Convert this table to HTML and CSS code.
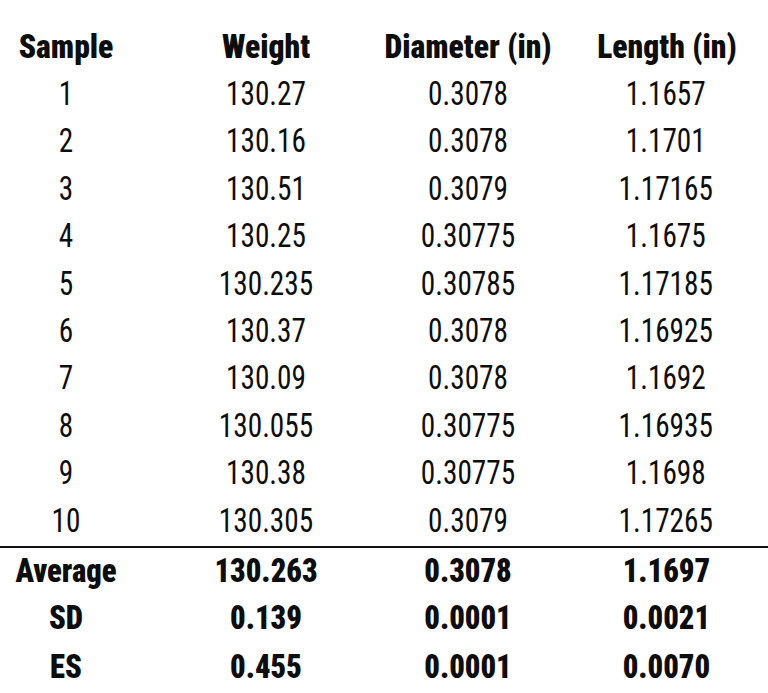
FILE: index.html
```html
<!DOCTYPE html>
<html lang="en">
<head>
<meta charset="utf-8">
<title>Sample measurements</title>
<link rel="stylesheet" href="styles.css">
</head>
<body>
<div class="sheet">
  <div class="row head"><div class="cell">Sample</div><div class="cell">Weight</div><div class="cell">Diameter (in)</div><div class="cell last">Length (in)</div></div>
  <div class="row"><div class="cell">1</div><div class="cell">130.27</div><div class="cell">0.3078</div><div class="cell last">1.1657</div></div>
  <div class="row"><div class="cell">2</div><div class="cell">130.16</div><div class="cell">0.3078</div><div class="cell last">1.1701</div></div>
  <div class="row"><div class="cell">3</div><div class="cell">130.51</div><div class="cell">0.3079</div><div class="cell last">1.17165</div></div>
  <div class="row"><div class="cell">4</div><div class="cell">130.25</div><div class="cell">0.30775</div><div class="cell last">1.1675</div></div>
  <div class="row"><div class="cell">5</div><div class="cell">130.235</div><div class="cell">0.30785</div><div class="cell last">1.17185</div></div>
  <div class="row"><div class="cell">6</div><div class="cell">130.37</div><div class="cell">0.3078</div><div class="cell last">1.16925</div></div>
  <div class="row"><div class="cell">7</div><div class="cell">130.09</div><div class="cell">0.3078</div><div class="cell last">1.1692</div></div>
  <div class="row"><div class="cell">8</div><div class="cell">130.055</div><div class="cell">0.30775</div><div class="cell last">1.16935</div></div>
  <div class="row"><div class="cell">9</div><div class="cell">130.38</div><div class="cell">0.30775</div><div class="cell last">1.1698</div></div>
  <div class="row"><div class="cell">10</div><div class="cell">130.305</div><div class="cell">0.3079</div><div class="cell last">1.17265</div></div>
  <div class="rule"></div>
  <div class="row total first"><div class="cell">Average</div><div class="cell">130.263</div><div class="cell">0.3078</div><div class="cell last">1.1697</div></div>
  <div class="row total"><div class="cell">SD</div><div class="cell">0.139</div><div class="cell">0.0001</div><div class="cell last">0.0021</div></div>
  <div class="row total"><div class="cell">ES</div><div class="cell">0.455</div><div class="cell">0.0001</div><div class="cell last">0.0070</div></div>
</div>
</body>
</html>
```

FILE: styles.css
```css
html, body {
  margin: 0;
  padding: 0;
  background: #ffffff;
}
body {
  width: 768px;
  height: 693px;
  overflow: hidden;
  color: #0d0d0d;
  font-family: "Roboto Condensed", "Liberation Sans Narrow", "DejaVu Sans Condensed", "DejaVu Sans", sans-serif;
  font-stretch: condensed;
  font-size: 34px;
}
.sheet {
  padding-top: 22px;
}
.row {
  display: grid;
  grid-template-columns: 132px 268px 136px 1fr;
  align-items: center;
  height: 47.4px;
  line-height: 1;
  font-weight: 400;
}
.cell {
  display: flex;
  justify-content: center;
  white-space: nowrap;
  min-width: 0;
  transform: scaleX(0.86);
}
.cell.last {
  padding-left: 32px;
}
.head,
.total {
  font-weight: 900;
}
.head .cell,
.total .cell {
  transform: scaleX(0.9);
}
.head .cell {
  transform: scaleX(0.93);
}
.rule {
  height: 2px;
  margin-top: 2.5px;
  background: #111111;
}
.total {
  height: 49px;
}
.total.first {
  height: 45px;
}
```
